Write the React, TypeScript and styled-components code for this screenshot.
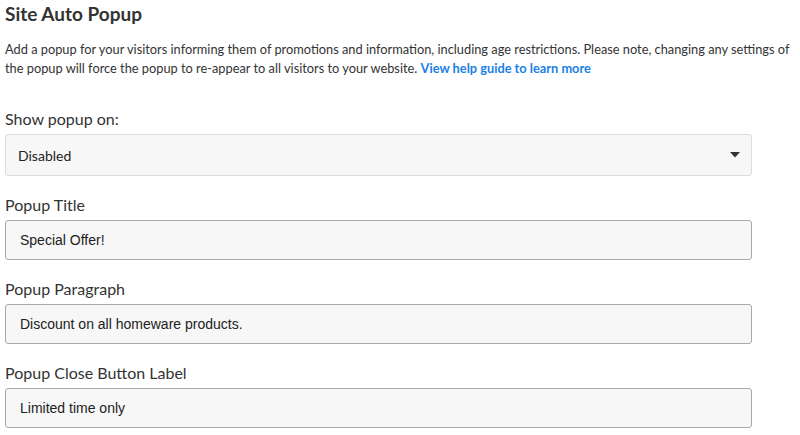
import styled, { createGlobalStyle } from "styled-components";

const GlobalStyle = createGlobalStyle`
  html, body {
    margin: 0;
    padding: 0;
    background: #fff;
  }
  body {
    font-family: "Lato", "Open Sans", sans-serif;
    color: #333;
  }
`;

const fields = [
  { label: "Popup Title", value: "Special Offer!" },
  { label: "Popup Paragraph", value: "Discount on all homeware products." },
  { label: "Popup Close Button Label", value: "Limited time only" },
];

const App = () => {
  return (
    <>
      <GlobalStyle />
      <Page>
        <Title>Site Auto Popup</Title>
        <Description>
          Add a popup for your visitors informing them of promotions and information, including age
          restrictions. Please note, changing any settings of the popup will force the popup to
          re-appear to all visitors to your website. <HelpLink href="#">View help guide to learn more</HelpLink>
        </Description>
        <Field first>
          <Label>Show popup on:</Label>
          <SelectBox>
            <span>Disabled</span>
            <Caret viewBox="0 0 10 6">
              <path d="M0 0 L10 0 L5 5.5 Z" fill="#333" />
            </Caret>
          </SelectBox>
        </Field>
        {fields.map((f) => (
          <Field key={f.label}>
            <Label>{f.label}</Label>
            <TextInput defaultValue={f.value} />
          </Field>
        ))}
      </Page>
    </>
  );
};

const Page = styled.div`
  width: 795px;
  padding: 0 0 0 5px;
  box-sizing: border-box;
`;

const Title = styled.h2`
  margin: 0;
  padding-top: 2px;
  font-size: 19px;
  line-height: 24px;
  font-weight: 700;
  color: #333;
`;

const Description = styled.p`
  margin: 14px 0 0;
  font-size: 12.8px;
  line-height: 19px;
  color: #333;
`;

const HelpLink = styled.a`
  color: #1a7fe6;
  font-weight: 700;
  text-decoration: none;
`;

const Field = styled.div<{ first?: boolean }>`
  width: 747px;
  margin-top: ${(p) => (p.first ? "31px" : "19px")};
`;

const Label = styled.div`
  font-size: 16px;
  line-height: 20px;
  color: #333;
  margin-bottom: 5px;
`;

const SelectBox = styled.div`
  height: 42px;
  box-sizing: border-box;
  border: 1px solid #dcdcdc;
  border-radius: 3px;
  background: #f7f7f7;
  display: flex;
  align-items: center;
  justify-content: space-between;
  padding: 0 11px 0 12px;
  font-size: 14px;
  color: #222;
`;

const Caret = styled.svg`
  width: 10px;
  height: 6px;
`;

const TextInput = styled.input`
  display: block;
  width: 100%;
  height: 40px;
  box-sizing: border-box;
  border: 1px solid #a9a9a9;
  border-radius: 3px;
  background: #f7f7f7;
  padding: 0 14px;
  font-family: "Liberation Sans", Arial, sans-serif;
  font-size: 14px;
  color: #222;
  outline: none;
`;

export default App;
